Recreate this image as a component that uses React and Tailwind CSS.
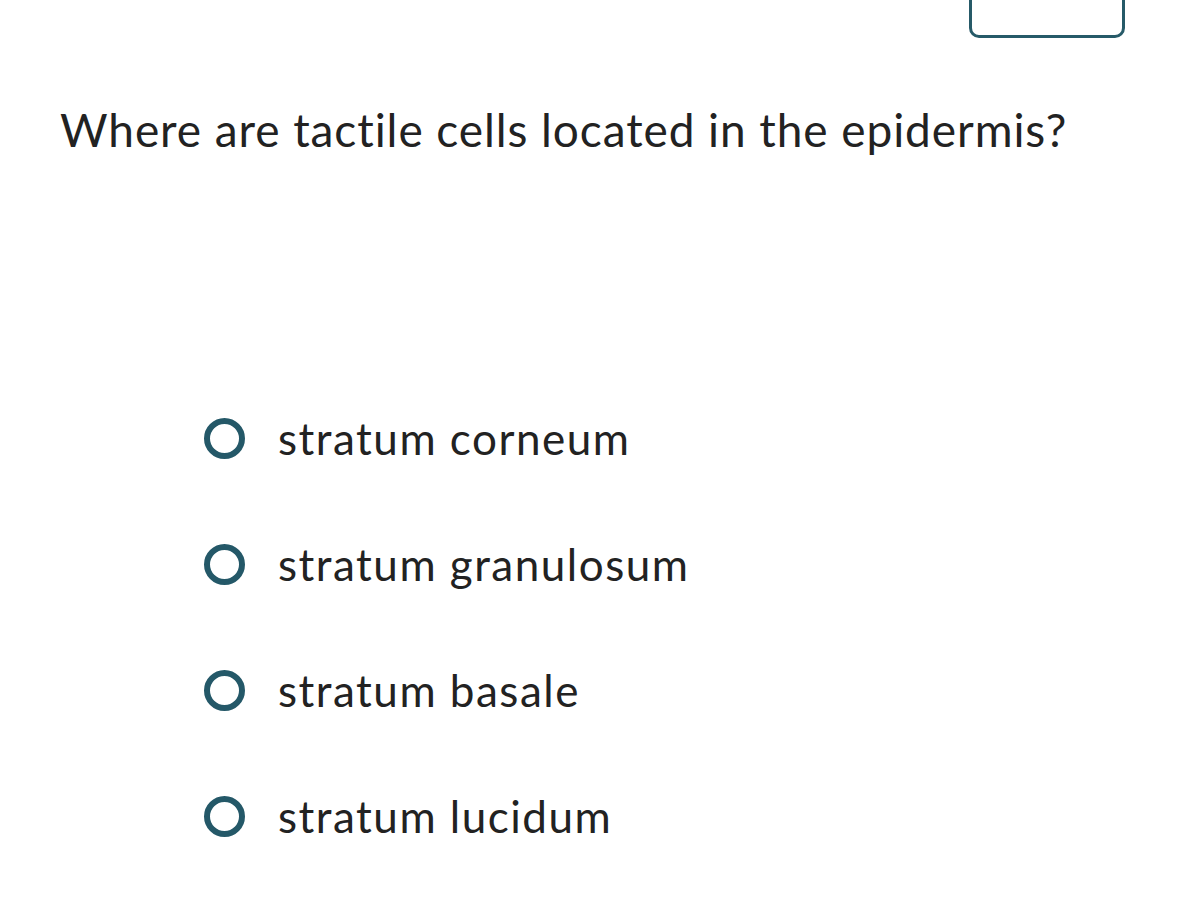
export default function App() {
  const options = ['stratum corneum', 'stratum granulosum', 'stratum basale', 'stratum lucidum'];

  return (
    <div className="w-[1179px] h-[909px] bg-white overflow-hidden" style={{ fontFamily: 'Lato, "Open Sans", sans-serif' }}>
      <div className="flex justify-end pr-[54px]">
        <div className="w-[156px] h-[48px] -mt-[10px] border-[3px] border-[#265a68] rounded-[10px]" />
      </div>
      <h1 className="mt-[63px] pl-[60px] text-[46px] leading-[58px] tracking-[0.92px] text-[#222222] font-normal">
        Where are tactile cells located in the epidermis?
      </h1>
      <div className="mt-[251px] pl-[204px] flex flex-col gap-[70px]">
        {options.map((opt) => (
          <label key={opt} className="flex items-center h-[56px]">
            <span className="w-[41px] h-[41px] rounded-full border-[6px] border-[#245868] shrink-0" />
            <span className="ml-[33px] text-[44px] tracking-[1.5px] text-[#222222]">{opt}</span>
          </label>
        ))}
      </div>
    </div>
  );
}
